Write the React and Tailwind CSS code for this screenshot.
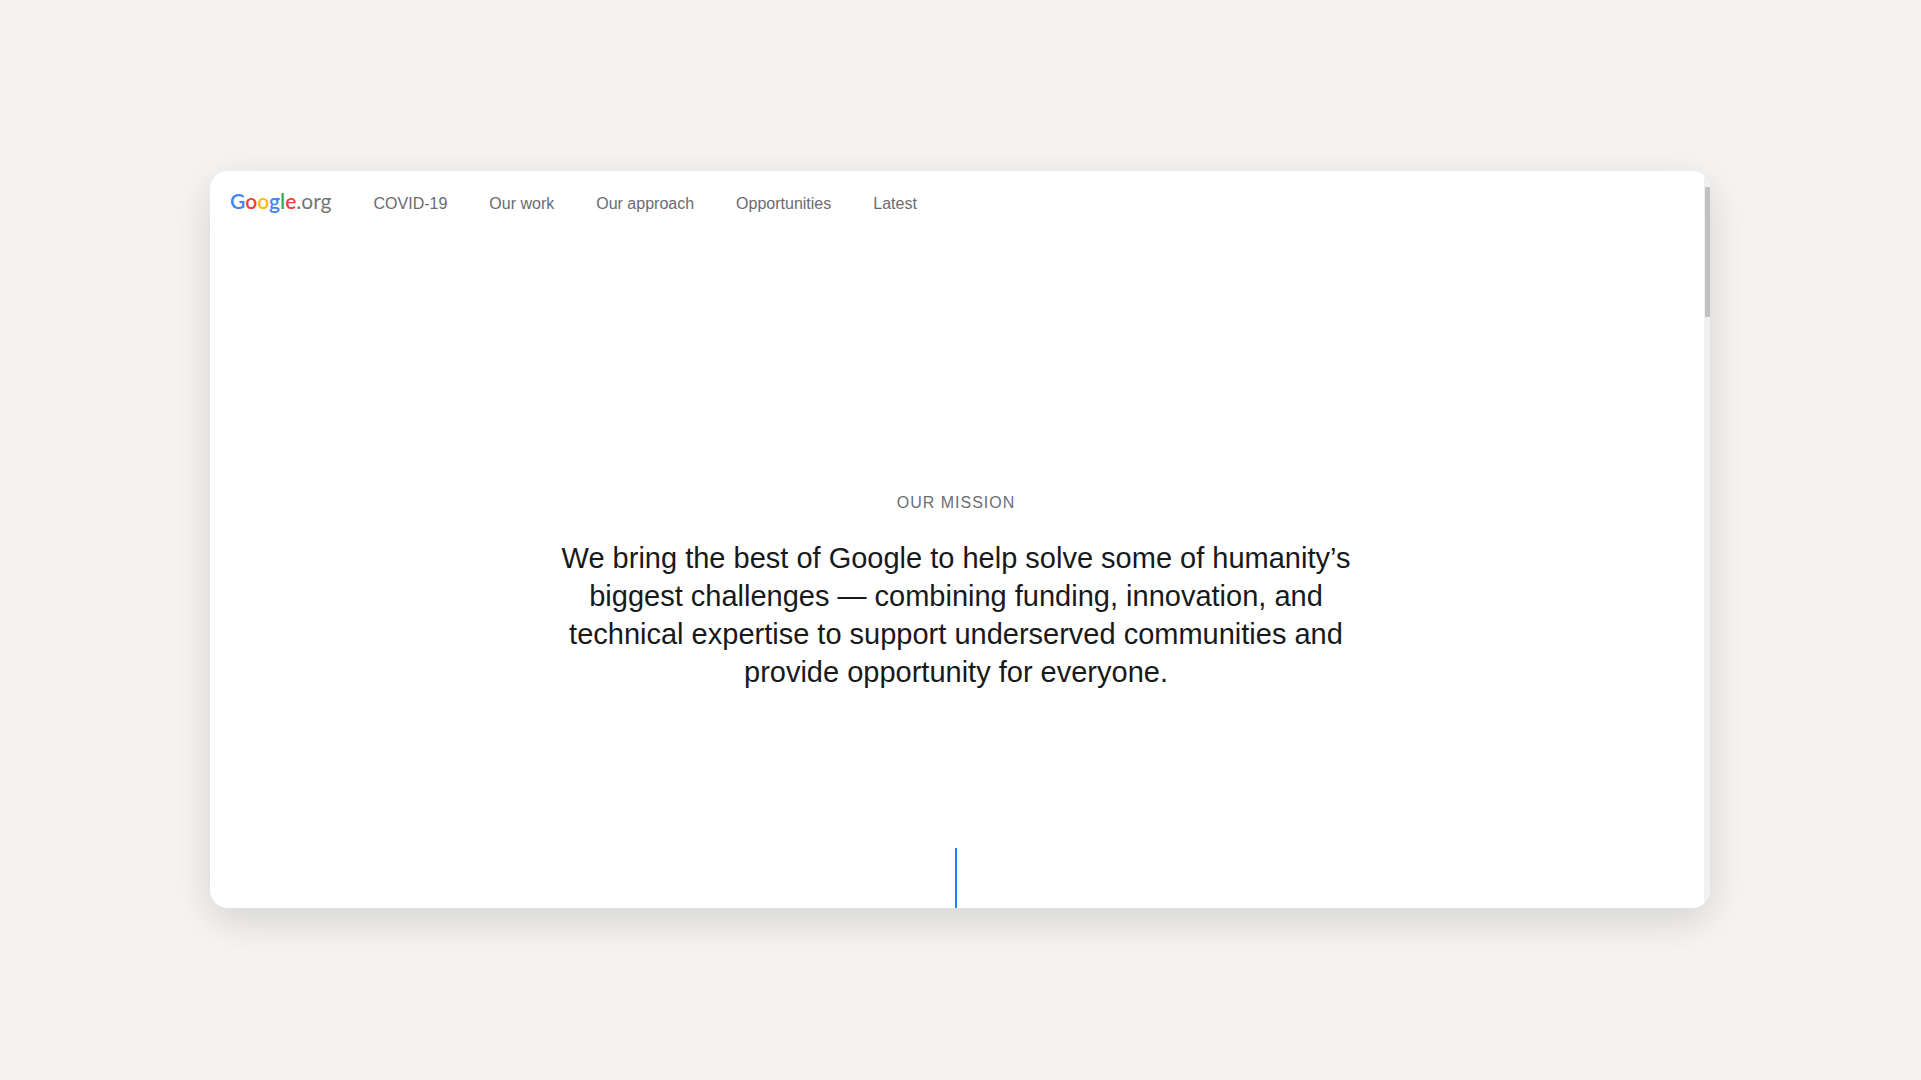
const navLinks = ["COVID-19", "Our work", "Our approach", "Opportunities", "Latest"];

const logoLetters = [
  { letter: "G", color: "text-[#4285f4]" },
  { letter: "o", color: "text-[#ea4335]" },
  { letter: "o", color: "text-[#fbbc05]" },
  { letter: "g", color: "text-[#4285f4]" },
  { letter: "l", color: "text-[#34a853]" },
  { letter: "e", color: "text-[#ea4335]" },
];

const Logo = () => (
  <a href="#home" className="font-['Lato',sans-serif] text-[21px] leading-6 text-[#757575]">
    {logoLetters.map(({ letter, color }, index) => (
      <span key={index} className={`font-semibold ${color}`}>{letter}</span>
    ))}
    <span>.org</span>
  </a>
);

const Header = () => (
  <header className="flex items-baseline gap-[42px] px-5 pt-[18px]">
    <Logo />
    <nav className="flex gap-[42px]">
      {navLinks.map((label) => (
        <a key={label} href="#" className="text-base leading-6 text-[#6b6b6f]">
          {label}
        </a>
      ))}
    </nav>
  </header>
);

const Mission = () => (
  <section className="flex flex-col items-center px-6 pt-[275px] text-center">
    <h2 className="text-base leading-6 tracking-[1px] text-[#6b6f74] uppercase">Our mission</h2>
    <p className="mt-6 max-w-[816px] text-[29px] leading-[38px] text-[#18191b]">
      We bring the best of Google to help solve some of humanity’s biggest challenges — combining
      funding, innovation, and technical expertise to support underserved communities and provide
      opportunity for everyone.
    </p>
    <div className="mt-[157px] h-[60px] w-[2px] bg-[#1a80f8]" />
  </section>
);

const Scrollbar = () => (
  <div className="w-2 shrink-0 border-l-2 border-white bg-[#f1f1f1] pt-4 pl-px">
    <div className="h-[130px] bg-[#c1c1c1]" />
  </div>
);

const App = () => {
  return (
    <div className="flex min-h-screen items-center justify-center bg-[#f5f4f2] pr-px pb-px font-['Liberation_Sans',Arial,sans-serif]">
      <div className="flex w-full max-w-[1500px] overflow-hidden rounded-[18px] bg-white shadow-[0_12px_40px_rgba(0,0,0,0.14)]">
        <main className="grow">
          <Header />
          <Mission />
        </main>
        <Scrollbar />
      </div>
    </div>
  );
};

export default App;
